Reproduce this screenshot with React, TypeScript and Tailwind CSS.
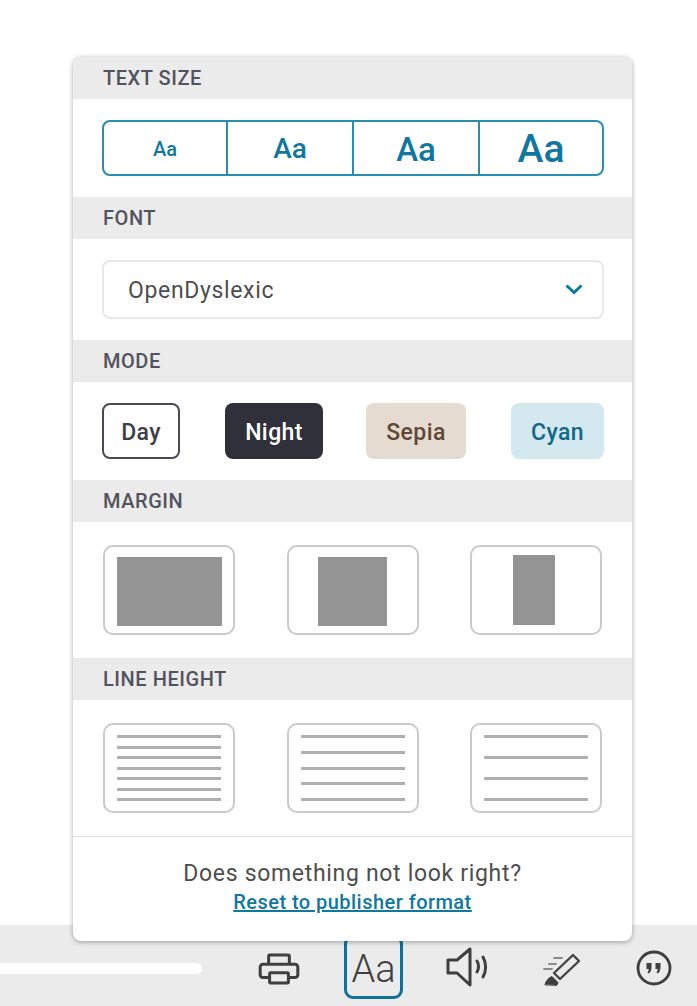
import type { ReactNode } from 'react';

const font = { fontFamily: 'Roboto, "Noto Sans", sans-serif' };

function SectionHead({ children }: { children: ReactNode }) {
  return (
    <div className="flex h-[42px] items-center bg-[#ebebeb] pl-[30px] text-[20px] font-medium leading-none tracking-[0.55px] text-[#53535f]">
      <span className="-mt-[1px]">{children}</span>
    </div>
  );
}

function Card({ children, className }: { children: ReactNode; className: string }) {
  return (
    <div className={`flex h-[90px] w-[132px] rounded-[10px] border-2 border-[#cacaca] bg-white ${className}`}>
      {children}
    </div>
  );
}

function LineCard({ count }: { count: number }) {
  return (
    <Card className="flex-col justify-between px-[12px] pt-[10px] pb-[10px]">
      {Array.from({ length: count }).map((_, i) => (
        <div key={i} className="h-[3px] w-full bg-[#b0b0b0]" />
      ))}
    </Card>
  );
}

function BottomBar() {
  return (
    <div className="flex h-[81px] items-start bg-[#ebebeb]">
      <div className="mt-[38px] h-[11px] w-[202px] rounded-r-full bg-white" />
      <svg className="ml-[56px] mt-[28px]" width="42" height="32" viewBox="0 0 44 34" fill="none" stroke="#3f3f3f" strokeWidth="3.2" strokeLinejoin="round">
        <path d="M11 12V3a1 1 0 0 1 1-1h20a1 1 0 0 1 1 1v9" />
        <path d="M11 26H5a3 3 0 0 1-3-3v-8a3 3 0 0 1 3-3h34a3 3 0 0 1 3 3v8a3 3 0 0 1-3 3h-6" />
        <path d="M13 21h18a1 1 0 0 1 1 1v9a1 1 0 0 1-1 1H13a1 1 0 0 1-1-1v-9a1 1 0 0 1 1-1z" />
      </svg>
      <div className="ml-[44px] mt-[10px] flex h-[64px] w-[59px] items-end justify-center rounded-[9px] border-[3px] border-[#0f7398] pb-[8px] text-[38px] font-light leading-none text-[#404040]">
        Aa
      </div>
      <svg className="ml-[43px] mt-[22px]" width="44" height="40" viewBox="0 0 44 40" fill="none" stroke="#3f3f3f" strokeLinejoin="round" strokeLinecap="round">
        <path d="M24 2 11 13H2v13h9l13 12z" strokeWidth="3" />
        <path d="M31 14c2 3 2 8 0 11" strokeWidth="3" />
        <path d="M37 10c3.500 6 3.500 14 0 20" strokeWidth="3" />
      </svg>
      <svg className="ml-[53px] mt-[28px]" width="38" height="33" viewBox="0 0 38 33" fill="none" stroke="#454545" strokeLinecap="round" strokeLinejoin="round">
        <path d="M17 26 36 8l-6-6-19 18z" strokeWidth="2.400" />
        <path d="M2 31.500c1-4 4-7 7-8l6 6-1 2.500z" fill="#3f3f3f" stroke="#3f3f3f" strokeWidth="1" />
        <path d="M11 5h8M6 11h7M1 16h8" stroke="#8a8a8a" strokeWidth="1.800" />
      </svg>
      <svg className="ml-[54px] mt-[24px]" width="38" height="38" viewBox="0 0 38 38" fill="none">
        <circle cx="19" cy="19" r="16" stroke="#3f3f3f" strokeWidth="2.800" />
        <path d="M11.500 14h5v4.500c0 2.500-1 4.500-2.500 6l-1.500-1c.8-1.200 1.200-2.300 1.200-3.500h-2.200z" fill="#3f3f3f" />
        <path d="M20.500 14h5v4.500c0 2.500-1 4.500-2.500 6l-1.500-1c.8-1.200 1.200-2.300 1.200-3.500h-2.200z" fill="#3f3f3f" />
      </svg>
    </div>
  );
}

export default function App() {
  const sizes = [
    { cls: 'text-[20px]', w: 'w-[124px]' },
    { cls: 'text-[28px]', w: 'w-[126px]' },
    { cls: 'text-[33px]', w: 'w-[126px]' },
    { cls: 'text-[39px]', w: 'flex-1' },
  ];

  return (
    <div style={font} className="relative flex h-[1006px] w-[697px] flex-col justify-end overflow-hidden bg-white">
      <BottomBar />

      <div className="absolute left-[73px] top-[57px] w-[559px] overflow-hidden rounded-[8px] bg-white shadow-[0_1px_5px_rgba(0,0,0,0.35)]">
        <SectionHead>TEXT SIZE</SectionHead>
        <div className="h-[98px] pl-[29px] pr-[29px] pt-[21px]">
          <div className="flex h-[56px] w-[502px] divide-x-2 divide-[#2a8db1] rounded-[8px] border-2 border-[#2a8db1]">
            {sizes.map((s, i) => (
              <div key={i} className={`flex items-center justify-center pt-[2px] font-medium leading-none text-[#10789f] ${s.w} ${s.cls}`}>
                Aa
              </div>
            ))}
          </div>
        </div>

        <SectionHead>FONT</SectionHead>
        <div className="h-[101px] pl-[29px] pt-[21px]">
          <div className="flex h-[59px] w-[502px] items-center justify-between rounded-[8px] border-2 border-[#e8e8e8] pl-[24px] pr-[19px] text-[23px] tracking-[0.65px] text-[#4e4e4e]">
            <span className="pt-[3px]">OpenDyslexic</span>
            <svg width="18" height="11" viewBox="0 0 18 11" fill="none" stroke="#10789f" strokeWidth="3">
              <path d="M1.500 1.500 9 8.500l7.500-7" />
            </svg>
          </div>
        </div>

        <SectionHead>MODE</SectionHead>
        <div className="flex h-[98px] items-start pl-[29px] pt-[21px] text-[23px] font-medium leading-none tracking-[0.4px]">
          <div className="flex h-[56px] w-[78px] items-center justify-center rounded-[8px] border-2 border-[#4a4a54] pt-[2px] text-[#3f3f49]">Day</div>
          <div className="ml-[45px] flex h-[56px] w-[98px] items-center justify-center rounded-[8px] bg-[#30303a] pt-[2px] text-white">Night</div>
          <div className="ml-[43px] flex h-[56px] w-[100px] items-center justify-center rounded-[8px] bg-[#e6dbd0] pt-[2px] text-[#5f4835]">Sepia</div>
          <div className="ml-[45px] flex h-[56px] w-[93px] items-center justify-center rounded-[8px] bg-[#d4e8ef] pt-[2px] text-[#10688a]">Cyan</div>
        </div>

        <SectionHead>MARGIN</SectionHead>
        <div className="flex h-[136px] items-start pl-[30px] pt-[23px]">
          <Card className="items-center justify-center pt-[2px]">
            <div className="h-[69px] w-[105px] bg-[#949494]" />
          </Card>
          <Card className="ml-[52px] items-center justify-center pt-[2px] pr-[1px]">
            <div className="h-[69px] w-[69px] bg-[#949494]" />
          </Card>
          <Card className="ml-[51px] items-center justify-center pr-[5px]">
            <div className="h-[70px] w-[42px] bg-[#949494]" />
          </Card>
        </div>

        <SectionHead>LINE HEIGHT</SectionHead>
        <div className="flex h-[137px] items-start border-b border-[#e0e0e0] pl-[30px] pt-[23px]">
          <LineCard count={7} />
          <div className="ml-[52px]">
            <LineCard count={5} />
          </div>
          <div className="ml-[51px]">
            <LineCard count={4} />
          </div>
        </div>

        <div className="flex h-[104px] flex-col items-center pt-[23px] text-center">
          <div className="text-[23px] leading-[27px] tracking-[0.68px] text-[#4e4e4e]">Does something not look right?</div>
          <div className="mt-[2px] text-[20px] font-medium leading-[27px] tracking-[0.46px] text-[#10789f] underline">Reset to publisher format</div>
        </div>
      </div>
    </div>
  );
}
